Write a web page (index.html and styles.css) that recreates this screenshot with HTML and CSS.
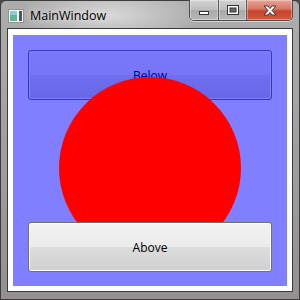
FILE: index.html
```html
<!DOCTYPE html>
<html lang="en">
<head>
  <meta charset="UTF-8" />
  <title>MainWindow</title>
  <link rel="stylesheet" href="styles.css">
</head>
<body>
  <div class="window">
    <div class="titlebar">
      <svg class="app-icon" width="16" height="14" viewBox="0 0 16 14">
        <rect x="0.5" y="0.5" width="15" height="13" fill="#f4f6f4" stroke="#8c9490"/>
        <rect x="2" y="2" width="7" height="10" fill="#5fb59a"/>
        <rect x="2" y="2" width="7" height="4" fill="#8ec9d6"/>
        <rect x="11" y="2" width="3" height="10" fill="#4c5a5a"/>
      </svg>
      <span class="title">MainWindow</span>
      <div class="caption-buttons">
        <div class="cap-btn minimize">
          <svg width="12" height="6" viewBox="0 0 12 6"><rect x="1.5" y="1.5" width="9" height="3" fill="#fff" stroke="#333"/></svg>
        </div>
        <div class="cap-btn maximize">
          <svg width="12" height="10" viewBox="0 0 12 10"><rect x="0.5" y="0.5" width="11" height="9" fill="#fff" stroke="#333"/><rect x="3" y="3" width="6" height="4" fill="#6a6a6a" stroke="#333"/></svg>
        </div>
        <div class="cap-btn close">
          <svg width="16" height="11" viewBox="0 0 16 11"><path d="M2 1 L6 1 L8 3.5 L10 1 L14 1 L10 5.5 L14 10 L10 10 L8 7.5 L6 10 L2 10 L6 5.5 Z" fill="#fff" stroke="#3a3a3a" stroke-width="1" stroke-linejoin="round"/></svg>
        </div>
      </div>
    </div>
    <div class="client">
      <div class="stage">
        <button class="win-btn below">Below</button>
        <div class="tint"></div>
        <div class="ball"></div>
        <button class="win-btn above">Above</button>
      </div>
    </div>
  </div>
</body>
</html>
```

FILE: styles.css
```css
body {
  margin: 0;
  background: #4a4a4a;
  font-family: "Open Sans", "Noto Sans", sans-serif;
}

.window {
  width: 300px;
  height: 300px;
  box-sizing: border-box;
  border: 1px solid #3c3c3c;
  border-radius: 6px 6px 0 0;
  padding: 0 6px 7px 6px;
  background:
    radial-gradient(ellipse 90px 30px at 110px 14px, rgba(230,230,230,0.75), rgba(230,230,230,0)),
    linear-gradient(to bottom, #adadad 0%, #a2a2a2 40%, #958f90 100%);
  display: flex;
  flex-direction: column;
}

.titlebar {
  height: 27px;
  display: flex;
  align-items: center;
  position: relative;
}

.app-icon {
  margin: 2px 0 0 1px;
}

.title {
  margin-left: 6px;
  margin-top: 2px;
  font-size: 12.5px;
  color: #000;
  text-shadow: 0 0 6px rgba(255,255,255,0.9);
}

.caption-buttons {
  position: absolute;
  top: -1px;
  right: 0;
  display: flex;
  height: 20px;
  border: 1px solid #4d4d4d;
  border-top: none;
  border-radius: 0 0 5px 5px;
  overflow: hidden;
  box-shadow: 0 1px 0 rgba(255,255,255,0.5);
}

.cap-btn {
  display: flex;
  align-items: center;
  justify-content: center;
  background: linear-gradient(to bottom, #d2d2d2 0%, #bdbdbd 50%, #a9a9a9 51%, #b8b8b8 100%);
  box-shadow: inset 0 0 0 1px rgba(255,255,255,0.35);
}

.minimize {
  width: 28px;
  border-right: 1px solid #5a5a5a;
}

.minimize svg {
  margin-top: 5px;
}

.maximize {
  width: 27px;
  border-right: 1px solid #5a5a5a;
}

.close {
  width: 45px;
  background: linear-gradient(to bottom, #e6a597 0%, #d97563 45%, #c8432b 55%, #d4593c 100%);
}

.client {
  flex: 1;
  border: 1px solid #3b3b3b;
  background: #fff;
  padding: 6px 5px 5px 5px;
  display: flex;
}

.stage {
  flex: 1;
  position: relative;
  padding: 15px 15px 14px 15px;
  display: flex;
  flex-direction: column;
  justify-content: space-between;
  background: #fff;
}

.tint {
  position: absolute;
  inset: 0;
  background: rgba(0, 0, 255, 0.5);
}

.ball {
  position: absolute;
  left: 46px;
  top: 42px;
  width: 182px;
  height: 182px;
  border-radius: 50%;
  background: #ff0000;
}

.win-btn {
  height: 50px;
  border: 1px solid #707070;
  border-radius: 3px;
  background: linear-gradient(to bottom, #f2f2f2 0%, #ebebeb 50%, #dddddd 50%, #cfcfcf 100%);
  box-shadow: inset 0 0 0 1px #fcfcfc;
  font-family: "Open Sans", "Noto Sans", sans-serif;
  font-size: 12px;
  color: #000;
  padding: 0;
}

.above {
  position: relative;
  margin-top: auto;
}
```
